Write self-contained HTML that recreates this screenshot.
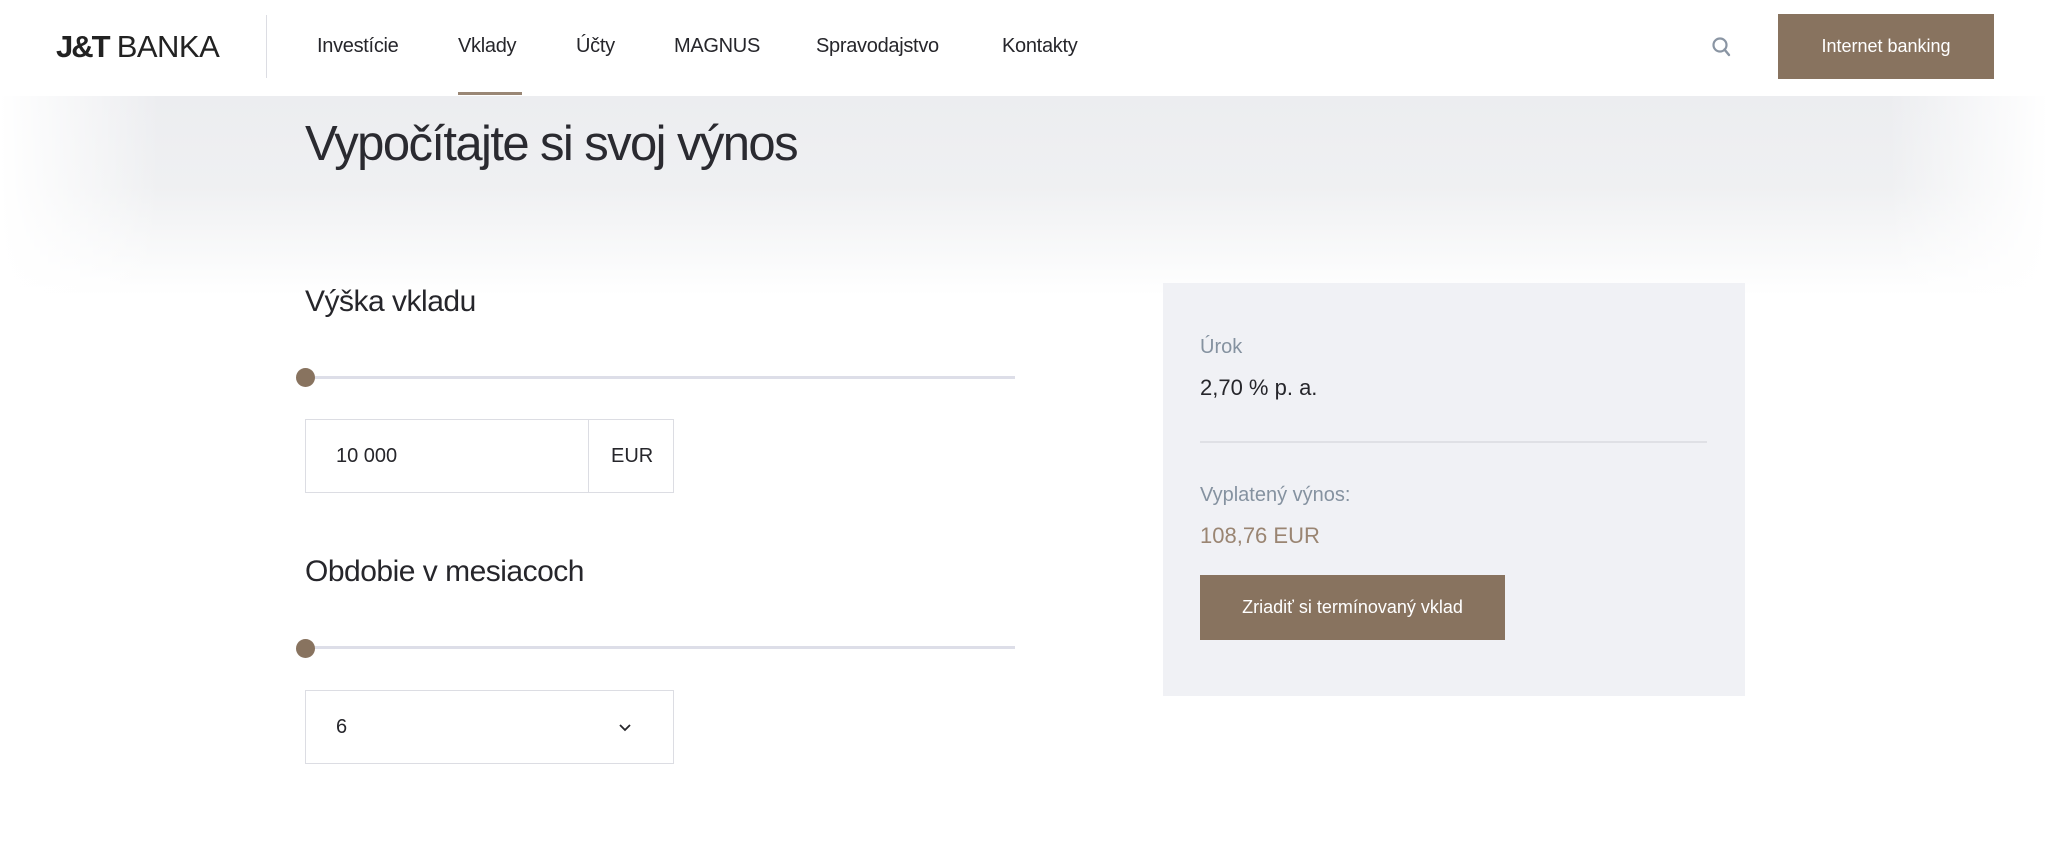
<!DOCTYPE html>
<html><head><meta charset="utf-8"><style>
*{margin:0;padding:0;box-sizing:border-box}
body{width:2048px;height:841px;background:#fff;font-family:"Liberation Sans",sans-serif;color:#26262b;position:relative;overflow:hidden}
.a{position:absolute;white-space:nowrap}
.hero{position:absolute;left:0;top:96px;width:2048px;height:200px;background:linear-gradient(to bottom,#ecedf0 0%,#eff0f2 45%,#fff 100%)}
.hero:before{content:"";position:absolute;left:0;top:0;width:160px;height:100%;background:linear-gradient(to right,#fff,rgba(255,255,255,0))}
.hero:after{content:"";position:absolute;right:0;top:0;width:160px;height:100%;background:linear-gradient(to left,#fff,rgba(255,255,255,0))}
.nav{font-size:20px;top:35px;color:#26262b;letter-spacing:-0.3px}
.track{position:absolute;left:306px;width:709px;height:3px;background:#dddee8}
.thumb{position:absolute;width:19px;height:19px;border-radius:50%;background:#88735f}
.box{position:absolute;border:1px solid #dcdde3;background:#fff}
</style></head><body>
<div class="a" style="left:56px;top:29px;font-size:31px;letter-spacing:-0.5px;color:#222"><b style="letter-spacing:-2px">J&amp;T</b> BANKA</div>
<div class="a" style="left:266px;top:15px;width:1px;height:63px;background:#dcdde3"></div>
<div class="a nav" style="left:317px">Investície</div>
<div class="a nav" style="left:458px">Vklady</div>
<div class="a nav" style="left:576px">Účty</div>
<div class="a nav" style="left:674px">MAGNUS</div>
<div class="a nav" style="left:816px">Spravodajstvo</div>
<div class="a nav" style="left:1002px">Kontakty</div>
<div class="a" style="left:458px;top:92px;width:64px;height:3px;background:#9a8775"></div>
<svg class="a" style="left:1710px;top:36px" width="24" height="22" viewBox="0 0 24 22"><circle cx="10" cy="9" r="6.5" fill="none" stroke="#8a95a3" stroke-width="2.2"/><path d="M14.5 13.5L19 19" stroke="#8a95a3" stroke-width="2.4" stroke-linecap="round"/></svg>
<div class="a" style="left:1778px;top:14px;width:216px;height:65px;background:#88735f;color:#fff;font-size:18px;line-height:65px;text-align:center">Internet banking</div>
<div class="hero"></div>
<div class="a" style="left:305px;top:116px;font-size:49px;letter-spacing:-1.6px;color:#2a2a30">Vypočítajte si svoj výnos</div>
<div class="a" style="left:305px;top:285px;font-size:30px;letter-spacing:-0.5px">Výška vkladu</div>
<div class="track" style="top:376px"></div><div class="thumb" style="left:296px;top:368px"></div>
<div class="box" style="left:305px;top:419px;width:369px;height:74px"></div>
<div class="a" style="left:588px;top:419px;width:1px;height:74px;background:#dcdde3"></div>
<div class="a" style="left:336px;top:445px;font-size:20px">10 000</div>
<div class="a" style="left:611px;top:445px;font-size:20px">EUR</div>
<div class="a" style="left:305px;top:555px;font-size:30px;letter-spacing:-0.5px">Obdobie v mesiacoch</div>
<div class="track" style="top:646px"></div><div class="thumb" style="left:296px;top:639px"></div>
<div class="box" style="left:305px;top:690px;width:369px;height:74px"></div>
<div class="a" style="left:336px;top:716px;font-size:20px">6</div>
<svg class="a" style="left:618px;top:723px" width="14" height="10" viewBox="0 0 14 10"><path d="M2 2l5 5 5-5" fill="none" stroke="#26262b" stroke-width="1.8"/></svg>
<div class="a" style="left:1163px;top:283px;width:582px;height:413px;background:#f0f1f5"></div>
<div class="a" style="left:1200px;top:336px;font-size:20px;color:#8592a0">Úrok</div>
<div class="a" style="left:1200px;top:375px;font-size:22px;color:#26262b">2,70 % p. a.</div>
<div class="a" style="left:1200px;top:441px;width:507px;height:2px;background:#dfe0e5"></div>
<div class="a" style="left:1200px;top:484px;font-size:20px;color:#8592a0">Vyplatený výnos:</div>
<div class="a" style="left:1200px;top:523px;font-size:22px;color:#9a8572">108,76 EUR</div>
<div class="a" style="left:1200px;top:575px;width:305px;height:65px;background:#88735f;color:#fff;font-size:18px;line-height:65px;text-align:center">Zriadiť si termínovaný vklad</div>
</body></html>
